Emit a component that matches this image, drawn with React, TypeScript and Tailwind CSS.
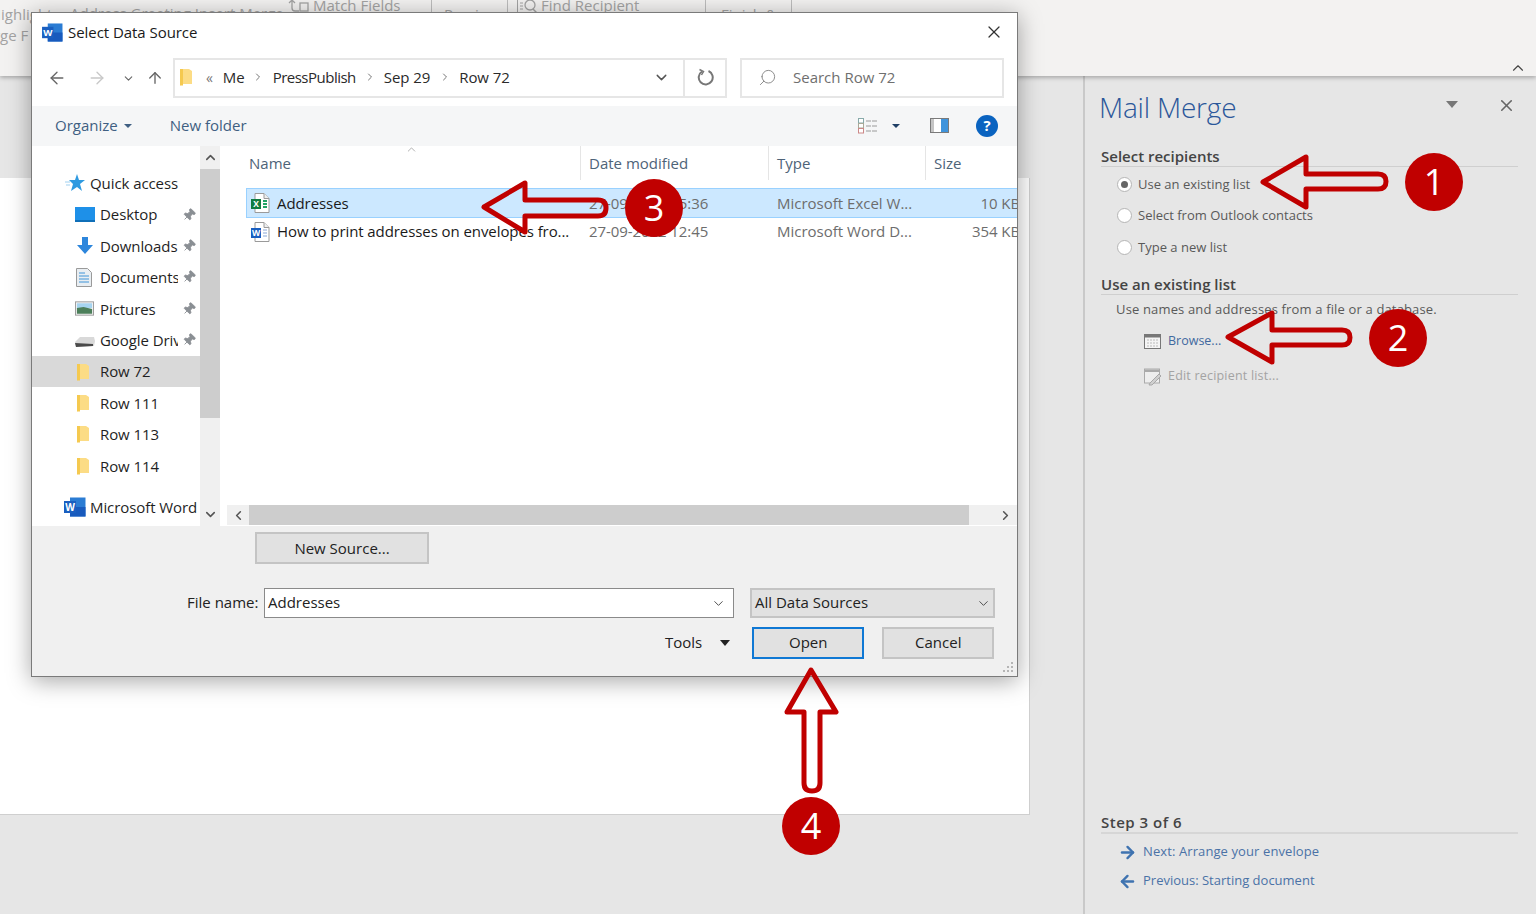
import { ChevronDown, ChevronLeft, ChevronRight, ChevronUp, ArrowLeft, ArrowRight, ArrowUp, Search, X, Pin } from 'lucide-react';

const WordIcon = ({ className = '' }: { className?: string }) => (
  <svg viewBox="0 0 22 20" className={className}>
    <rect x="6" y="0.5" width="15.5" height="19" fill="#2b7cd3" />
    <rect x="6" y="10" width="15.5" height="9.5" fill="#185abd" />
    <rect x="0" y="4" width="12" height="12" fill="#1a5fc0" />
    <text x="6" y="13.5" textAnchor="middle" fontSize="10" fontWeight="700" fill="#fff" fontFamily="Open Sans">W</text>
  </svg>
);

const DocIcon = ({ kind }: { kind: 'x' | 'w' }) => (
  <svg viewBox="0 0 20 20" className="w-[20px] h-[20px] shrink-0">
    <path d="M5 .5h9l5 5v14H5z" fill="#fff" stroke="#9a9a9a" />
    <path d="M14 .5v5h5" fill="#eee" stroke="#9a9a9a" />
    {kind === 'x' ? (
      <>
        <path d="M13 8h4M13 11h4M13 14h4" stroke="#21a366" strokeWidth="2" />
        <rect x="1" y="6" width="10" height="10" fill="#107c41" />
        <text x="6" y="14" textAnchor="middle" fontSize="8.5" fontWeight="700" fill="#fff" fontFamily="Open Sans">X</text>
      </>
    ) : (
      <>
        <path d="M13 8h4M13 11h4M13 14h4" stroke="#8aa8d8" strokeWidth="1.2" />
        <rect x="1" y="6" width="10" height="10" fill="#1a5fc0" />
        <text x="6" y="14" textAnchor="middle" fontSize="8.5" fontWeight="700" fill="#fff" fontFamily="Open Sans">W</text>
      </>
    )}
  </svg>
);

const Folder = () => (
  <svg viewBox="0 0 14 18" className="w-[14px] h-[18px]">
    <path d="M1 1h9l3 2v13H3l-2 1.500z" fill="#fcdc85" />
    <path d="M1 1h3v16.500H1z" fill="#f5c94f" />
  </svg>
);

const NavIcon = ({ name }: { name: string }) => {
  if (name === 'star')
    return (
      <svg viewBox="0 0 20 18" className="w-[20px] h-[18px]">
        <path d="M12 0l2 6h6l-5 4 2 7-5-4-6 4 2-7-4-4h6z" fill="#2f9ae0" />
        <path d="M0 8h5M1 11h4" stroke="#9fd0f0" />
      </svg>
    );
  if (name === 'desktop')
    return (
      <svg viewBox="0 0 20 15" className="w-[20px] h-[15px]">
        <rect width="20" height="14" fill="#1e90e8" />
        <rect y="13" width="20" height="2" fill="#0f6fb8" />
      </svg>
    );
  if (name === 'downloads')
    return (
      <svg viewBox="0 0 18 18" className="w-[18px] h-[18px] ml-[1px]">
        <path d="M6 0h6v8h5l-8 9-8-9h5z" fill="#2d86dc" />
      </svg>
    );
  if (name === 'documents')
    return (
      <svg viewBox="0 0 16 19" className="w-[16px] h-[19px] ml-[1px]">
        <path d="M.5.500h11l4 4v14H.5z" fill="#e9eef2" stroke="#9a9a9a" />
        <path d="M3 5h6M3 8h10M3 11h10M3 14h10" stroke="#3f94d8" />
      </svg>
    );
  if (name === 'pictures')
    return (
      <svg viewBox="0 0 20 15" className="w-[19px] h-[15px]">
        <rect x=".5" y=".5" width="19" height="14" fill="#f4f4f4" stroke="#9a9a9a" />
        <rect x="2" y="2" width="16" height="5" fill="#a6d4f0" />
        <path d="M2 7l7-1 9 2v5H2z" fill="#4c7f5a" />
      </svg>
    );
  if (name === 'drive')
    return (
      <svg viewBox="0 0 20 10" className="w-[20px] h-[10px] mt-[4px]">
        <path d="M5 0h14l1 4-1 5-18 1-1-5z" fill="#d9d9d9" />
        <path d="M0 6l18 1v2l-17 1z" fill="#4a4a4a" />
      </svg>
    );
  if (name === 'word') return <WordIcon className="w-[22px] h-[20px]" />;
  return <span className="ml-[1px] flex"><Folder /></span>;
};

const navItems = [
  { name: 'Desktop', icon: 'desktop', pin: true },
  { name: 'Downloads', icon: 'downloads', pin: true },
  { name: 'Documents', icon: 'documents', pin: true },
  { name: 'Pictures', icon: 'pictures', pin: true },
  { name: 'Google Drive', icon: 'drive', pin: true },
  { name: 'Row 72', icon: 'folder', active: true },
  { name: 'Row 111', icon: 'folder' },
  { name: 'Row 113', icon: 'folder' },
  { name: 'Row 114', icon: 'folder' },
];

const files = [
  { kind: 'x' as const, name: 'Addresses', date: '27-09-2022 15:36', type: 'Microsoft Excel W...', size: '10 KB', selected: true },
  { kind: 'w' as const, name: 'How to print addresses on envelopes fro...', date: '27-09-2022 12:45', type: 'Microsoft Word D...', size: '354 KB' },
];

const arrows = [
  'M1263 182 L1306 157 L1306 174 L1378 174 Q1386 174 1386 181.500 Q1386 189 1378 189 L1306 189 L1306 207 Z',
  'M1228 337 L1272 313 L1272 330 L1342 330 Q1350 330 1350 337.500 Q1350 345 1342 345 L1272 345 L1272 362 Z',
  'M484 207 L525 183 L525 200 L598 200 Q606 200 606 208 Q606 216 598 216 L525 216 L525 232 Z',
  'M811 670 L836 712 L820 712 L820 783 Q820 791 812 791 Q804 791 804 783 L804 712 L787 712 Z',
];

const badges = [
  { n: '1', cls: 'left-[1405px] top-[153px]' },
  { n: '2', cls: 'left-[1369px] top-[309px]' },
  { n: '3', cls: 'left-[625px] top-[179px]' },
  { n: '4', cls: 'left-[782px] top-[797px]' },
];

const Radio = ({ label, checked }: { label: string; checked?: boolean }) => (
  <div className="flex items-center h-[31.500px] pl-[16px]">
    <span className="w-[15px] h-[15px] rounded-full bg-white border border-[#b5b5b5] flex items-center justify-center mr-[6px]">
      {checked && <span className="w-[7px] h-[7px] rounded-full bg-[#666]" />}
    </span>
    <span className="text-[13px] text-[#595959]">{label}</span>
  </div>
);

const Btn = ({ label, cls }: { label: string; cls: string }) => (
  <div className={`flex items-center justify-center bg-[#e1e1e1] border-2 text-[15px] tracking-normal text-[#222] ${cls}`}>{label}</div>
);

export default function App() {
  return (
    <div className="relative w-[1536px] h-[914px] overflow-hidden bg-[#e6e6e6] font-['Open_Sans',sans-serif] flex flex-col">
      {/* ribbon */}
      <div className="h-[76px] shrink-0 bg-[#f3f2f1] shadow-[0_2px_4px_rgba(0,0,0,0.25)] relative z-10 text-[#a3a3a3] text-[15px] overflow-hidden">
        <span className="absolute left-[-10px] top-[3px] whitespace-nowrap">Highlight</span>
        <span className="absolute left-[70px] top-[2px] whitespace-nowrap">Address Greeting Insert Merge</span>
        <span className="absolute left-[-28px] top-[24px] whitespace-nowrap">Merge F</span>
        <svg viewBox="0 0 22 14" className="absolute left-[288px] top-0 w-[22px] h-[14px]">
          <path d="M1 3l3-3 3 3M4 1v7q0 3 3 3h4" fill="none" stroke="#a3a3a3" strokeWidth="1.300" />
          <rect x="12" y="3" width="8" height="8" fill="none" stroke="#a3a3a3" strokeWidth="1.300" />
        </svg>
        <span className="absolute left-[313px] top-[-6px] whitespace-nowrap">Match Fields</span>
        <span className="absolute left-[444px] top-[3px] whitespace-nowrap">Preview</span>
        <svg viewBox="0 0 22 14" className="absolute left-[517px] top-0 w-[22px] h-[14px]">
          <path d="M.5 0v13h8" fill="none" stroke="#a3a3a3" />
          <path d="M3 3h3M3 6h3M3 9h3" stroke="#a3a3a3" />
          <circle cx="13" cy="5" r="5" fill="none" stroke="#a3a3a3" strokeWidth="1.300" />
          <path d="M16 9l5 5" stroke="#a3a3a3" strokeWidth="1.500" />
        </svg>
        <span className="absolute left-[541px] top-[-6px] whitespace-nowrap">Find Recipient</span>
        <span className="absolute left-[721px] top-[3px] whitespace-nowrap">Finish &amp;</span>
        <div className="absolute left-[431px] top-0 w-px h-[13px] bg-[#bdbdbd]" />
        <div className="absolute left-[507px] top-0 w-px h-[13px] bg-[#bdbdbd]" />
        <div className="absolute left-[705px] top-0 w-px h-[13px] bg-[#bdbdbd]" />
        <div className="absolute left-[791px] top-0 w-px h-[13px] bg-[#bdbdbd]" />
        <ChevronUp className="absolute left-[1509px] top-[59px] text-[#444]" size={18} strokeWidth={1.5} />
      </div>

      <div className="flex-1 flex min-h-0">
        {/* document area */}
        <div className="w-[1083px] pt-[102px]">
          <div className="w-[1030px] h-[637px] bg-white border-r border-b border-[#cfcfcf]" />
        </div>

        {/* task pane */}
        <div className="flex-1 border-l-2 border-[#c9c9c9] pl-[16px] pr-[18px] flex flex-col relative">
          <div className="flex items-center h-[62px] pt-[3px] -ml-[2px]">
            <span className="text-[28px] font-light text-[#2b579a] tracking-[-0.2px] -mt-[4px]">Mail Merge</span>
            <svg viewBox="0 0 12 7" className="w-[12px] h-[7px] ml-[210px] mb-[8px]"><path d="M0 0h12L6 7z" fill="#777" /></svg>
            <X className="ml-[39px] mb-[6px] text-[#666]" size={19} strokeWidth={2} />
          </div>
          <div className="mt-[8px] text-[15px] font-semibold text-[#444] border-b border-[#cfcfcf] h-[21px] leading-[20px]">Select recipients</div>
          <div className="pt-[1.500px]">
            <Radio label="Use an existing list" checked />
            <Radio label="Select from Outlook contacts" />
            <Radio label="Type a new list" />
          </div>
          <div className="mt-[10.500px] text-[15px] font-semibold text-[#444] border-b border-[#cfcfcf] h-[21px] leading-[20px]">Use an existing list</div>
          <div className="pl-[15px] mt-[4.500px] text-[13px] tracking-[0.15px] text-[#595959] h-[20px] leading-[20px]">Use names and addresses from a file or a database.</div>
          <div className="flex items-center pl-[43px] mt-[12.500px] h-[20px]">
            <svg viewBox="0 0 17 15" className="w-[17px] h-[15px] mr-[7px]">
              <rect x=".5" y=".5" width="16" height="14" fill="#f5f5f5" stroke="#777" />
              <rect x="1" y="1" width="15" height="2.500" fill="#777" />
              <path d="M3 6h11M3 9h11M3 12h11" stroke="#bbb" strokeDasharray="2 1" />
            </svg>
            <span className="text-[12.500px] text-[#41699f]">Browse...</span>
          </div>
          <div className="flex items-center pl-[43px] mt-[15px] h-[20px]">
            <svg viewBox="0 0 18 18" className="w-[18px] h-[18px] mr-[6px]">
              <rect x=".5" y="1" width="15" height="14" fill="#eee" stroke="#aaa" />
              <rect x="1" y="1.500" width="14" height="2.500" fill="#aaa" />
              <path d="M6 15l9-9 2 2-9 9H5z" fill="#d0d0d0" stroke="#a8a8a8" />
            </svg>
            <span className="text-[12.500px] tracking-[0.2px] text-[#a3a3a3]">Edit recipient list...</span>
          </div>
          <div className="flex-1" />
          <div className="text-[15px] tracking-[0.5px] font-semibold text-[#444] border-b-2 border-[#d6d6d6] h-[22px] leading-[20px]">Step 3 of 6</div>
          <div className="flex items-center pl-[17px] mt-[8px] h-[20px]">
            <ArrowRight className="text-[#3f73b0] mr-[6px]" size={19} strokeWidth={3} />
            <span className="text-[13px] tracking-[0.1px] text-[#4a72a6]">Next: Arrange your envelope</span>
          </div>
          <div className="flex items-center pl-[17px] mt-[9px] mb-[23px] h-[20px]">
            <ArrowLeft className="text-[#3f73b0] mr-[6px]" size={19} strokeWidth={3} />
            <span className="text-[13px] text-[#4a72a6]">Previous: Starting document</span>
          </div>
        </div>
      </div>

      {/* file dialog */}
      <div className="absolute z-20 left-[31px] top-[12px] w-[987px] h-[665px] bg-white border border-[#7a7a7a] shadow-[0_4px_22px_rgba(0,0,0,0.35)] overflow-hidden flex flex-col text-[#222] tracking-[-0.08px]">
        <div className="h-[40px] shrink-0 flex items-center pl-[10px] pr-[13px] pb-[1px]">
          <WordIcon className="w-[21px] h-[19px] mr-[5px]" />
          <span className="text-[15px] tracking-[-0.05px] text-[#1a1a1a]">Select Data Source</span>
          <X className="ml-auto mb-[2px] text-[#333]" size={20} strokeWidth={1.500} />
        </div>
        <div className="h-[53px] shrink-0 flex items-start pt-[5px] pr-[13px] text-[#555]">
          <div className="w-[141px] h-[40px] flex items-center pl-[15px] shrink-0">
            <ArrowLeft size={20} strokeWidth={1.600} className="text-[#666]" />
            <ArrowRight size={20} strokeWidth={1.600} className="text-[#c8c8c8] ml-[20px]" />
            <ChevronDown size={13} strokeWidth={2} className="text-[#666] ml-[15px]" />
            <ArrowUp size={18} strokeWidth={1.800} className="text-[#666] ml-[11px]" />
          </div>
          <div className="w-[510px] h-[40px] border-2 border-r-0 border-[#e6e6e6] flex items-center pb-[2px] text-[15px] text-[#2a2a2a]">
            <div className="ml-[4px]"><Folder /></div>
            <span className="ml-[13px] text-[#777] text-[14px]">«</span>
            <span className="ml-[10px]">Me</span>
            <ChevronRight size={12} strokeWidth={2} className="ml-[7px] text-[#777]" />
            <span className="ml-[9px] tracking-[-0.5px]">PressPublish</span>
            <ChevronRight size={12} strokeWidth={2} className="ml-[8px] text-[#777]" />
            <span className="ml-[8px]">Sep 29</span>
            <ChevronRight size={12} strokeWidth={2} className="ml-[9px] text-[#777]" />
            <span className="ml-[8px]">Row 72</span>
            <ChevronDown size={17} className="ml-auto mr-[13px] text-[#555]" />
          </div>
          <div className="w-[44px] h-[40px] border-2 border-[#e6e6e6] flex items-center justify-center pb-[2px]">
            <svg viewBox="0 0 18 18" className="w-[18px] h-[18px]">
              <path d="M6 3.500A7 7 0 1 0 12.500 3" fill="none" stroke="#777" strokeWidth="2" />
              <path d="M3.500 1.500L7.500 3.500L5.500 7" fill="none" stroke="#777" strokeWidth="1.500" />
            </svg>
          </div>
          <div className="ml-[13px] flex-1 h-[40px] border-2 border-[#e6e6e6] flex items-center pl-[16px] pb-[2px] text-[15px] tracking-normal text-[#6f6f6f]">
            <Search size={19} strokeWidth={1.200} className="text-[#888] -scale-x-100 mr-[16px]" />
            Search Row 72
          </div>
        </div>
        <div className="h-[40px] shrink-0 bg-[#f5f6f7] flex items-center pl-[23px] pr-[19px] pb-[1px] text-[15px] tracking-normal text-[#3f5f82]">
          <span>Organize</span>
          <svg viewBox="0 0 8 4" className="w-[8px] h-[4px] ml-[6px]"><path d="M0 0h8L4 4z" fill="#3f5f82" /></svg>
          <span className="ml-[38px]">New folder</span>
          <svg viewBox="0 0 20 16" className="w-[20px] h-[16px] ml-auto">
            <rect x=".5" y=".5" width="5" height="4.500" fill="#fff" stroke="#8aa" />
            <rect x=".5" y="5.500" width="5" height="4.500" fill="#fff" stroke="#aa9" />
            <rect x=".5" y="10.500" width="5" height="4.500" fill="#fff" stroke="#c88" />
            <path d="M8 3h12M8 8h12M8 13h12" stroke="#9a9a9a" strokeDasharray="5 1" />
          </svg>
          <svg viewBox="0 0 8 4" className="w-[8px] h-[4px] ml-[14px]"><path d="M0 0h8L4 4z" fill="#1f3f66" /></svg>
          <svg viewBox="0 0 19 15" className="w-[19px] h-[15px] ml-[30px]">
            <rect x=".5" y=".5" width="18" height="14" fill="#fff" stroke="#7a7a7a" />
            <rect x="11" y="1" width="7" height="13" fill="#3f94dc" />
            <rect x="1" y="1" width="3" height="13" fill="#c5c5c5" />
          </svg>
          <div className="ml-[27px] w-[22px] h-[22px] rounded-full bg-[#0a63c0] flex items-center justify-center text-white text-[15px] font-bold">?</div>
        </div>
        <div className="h-[380px] shrink-0 flex">
          <div className="w-[168px] shrink-0 pt-[21.600px] text-[15px] text-[#1f1f1f]">
            <div className="h-[31.400px] flex items-center pl-[33px]">
              <span className="w-[24px]"><NavIcon name="star" /></span>
              <span className="ml-[1px]">Quick access</span>
            </div>
            {navItems.map(it => (
              <div key={it.name} className={`h-[31.400px] flex items-center relative ${it.active ? 'bg-[#d9d9d9]' : ''}`}>
                <span className="w-[68px] pl-[43px] flex justify-start items-center shrink-0"><NavIcon name={it.icon} /></span>
                <span className="w-[78px] overflow-hidden whitespace-nowrap">{it.name}</span>
                {it.pin && <Pin size={14} fill="#8a8f94" strokeWidth={1.500} className="text-[#8a8f94] rotate-45 ml-[4px]" />}
              </div>
            ))}
            <div className="h-[31.400px] mt-[10px] flex items-center pl-[32px]">
              <NavIcon name="word" />
              <span className="ml-[4px]">Microsoft Word</span>
            </div>
          </div>
          <div className="w-[20px] shrink-0 bg-[#f0f0f0] flex flex-col items-center">
            <div className="h-[23px] flex items-center"><ChevronUp size={15} strokeWidth={2.500} className="text-[#555]" /></div>
            <div className="w-full h-[249px] bg-[#cdcdcd]" />
            <div className="mt-auto h-[24px] flex items-center"><ChevronDown size={15} strokeWidth={2.500} className="text-[#555]" /></div>
          </div>
          <div className="flex-1 min-w-0 pl-[3px] flex flex-col">
            <div className="h-[34px] flex relative text-[15px] tracking-normal text-[#4e6378] shrink-0 pt-[6px]">
              <ChevronUp size={13} strokeWidth={1.200} className="absolute left-[182px] top-[-3px] text-[#888]" />
              <div className="w-[357px] pl-[26px]">Name</div>
              <div className="w-[188px] pl-[8px] border-l border-[#e5e5e5] -mt-[6px] pt-[6px]">Date modified</div>
              <div className="w-[157px] pl-[8px] border-l border-[#e5e5e5] -mt-[6px] pt-[6px]">Type</div>
              <div className="pl-[8px] border-l border-[#e5e5e5] -mt-[6px] pt-[6px]">Size</div>
            </div>
            <div className="flex-1 pt-[8px] pl-[23px] min-h-0">
              {files.map(f => (
                <div key={f.name} className={`flex items-center w-[790px] text-[15px] ${f.selected ? 'h-[30px] bg-[#cce8ff] border border-[#99d1ff]' : 'h-[27px] border border-transparent'}`}>
                  <span className="ml-[3px] flex"><DocIcon kind={f.kind} /></span>
                  <span className="w-[319px] pl-[7px] whitespace-nowrap text-[#1a1a1a]">{f.name}</span>
                  <span className="w-[188px] whitespace-nowrap text-[#6d6d6d]">{f.date}</span>
                  <span className="w-[182px] whitespace-nowrap tracking-normal text-[#6d6d6d]">{f.type}</span>
                  <span className="w-[61px] text-right whitespace-nowrap text-[#6d6d6d]">{f.size}</span>
                </div>
              ))}
            </div>
            <div className="h-[20px] shrink-0 mb-[1px] ml-[4px] flex items-center bg-[#f0f0f0]">
              <span className="w-[22px] flex justify-center"><ChevronLeft size={15} strokeWidth={2.500} className="text-[#555]" /></span>
              <div className="w-[720px] h-full bg-[#cdcdcd]" />
              <span className="ml-auto w-[24px] flex justify-center"><ChevronRight size={15} strokeWidth={2.500} className="text-[#555]" /></span>
            </div>
          </div>
        </div>
        <div className="flex-1 bg-[#f0f0f0] text-[15px] tracking-normal text-[#222]">
          <div className="pl-[223px] pt-[6px]">
            <Btn label="New Source..." cls="w-[174px] h-[32px] border-[#c4c4c4]" />
          </div>
          <div className="flex items-center mt-[24px] h-[30px] pl-[155px]">
            <span className="w-[76px] pb-[2px] whitespace-nowrap">File name:</span>
            <div className="w-[470px] h-[30px] ml-[1px] bg-white border border-[#8a8a8a] flex items-center pl-[3px] pb-[2px]">
              Addresses
              <ChevronDown size={15} strokeWidth={1.500} className="ml-auto mr-[7px] mt-[2px] text-[#444]" />
            </div>
            <div className="w-[245px] h-[30px] ml-[16px] bg-[#e1e1e1] border-2 border-[#c4c4c4] flex items-center pl-[3px] pb-[2px]">
              All Data Sources
              <ChevronDown size={15} strokeWidth={1.500} className="ml-auto mr-[2px] mt-[2px] text-[#444]" />
            </div>
          </div>
          <div className="flex items-center mt-[9px] h-[32px] pl-[633px]">
            <span className="pb-[2px]">Tools</span>
            <svg viewBox="0 0 10 6" className="w-[10px] h-[6px] ml-[18px]"><path d="M0 0h10L5 6z" fill="#222" /></svg>
            <Btn label="Open" cls="w-[112px] h-[32px] ml-[22px] pb-[2px] border-[#0f78d4]" />
            <Btn label="Cancel" cls="w-[112px] h-[32px] ml-[18px] pb-[2px] border-[#c4c4c4]" />
          </div>
        </div>
        <svg viewBox="0 0 12 12" className="absolute right-[3px] bottom-[3px] w-[12px] h-[12px]">
          <path d="M9 1h2v2H9zM5 5h2v2H5zM9 5h2v2H9zM1 9h2v2H1zM5 9h2v2H5zM9 9h2v2H9z" fill="#b5b5b5" />
        </svg>
      </div>

      {/* callouts */}
      <svg viewBox="0 0 1536 914" className="absolute inset-0 z-30 w-[1536px] h-[914px] pointer-events-none">
        {arrows.map(d => (
          <path key={d} d={d} fill="none" stroke="#c00000" strokeWidth="5" strokeLinejoin="round" />
        ))}
      </svg>
      {badges.map(b => (
        <div key={b.n} className={`absolute z-30 w-[58px] h-[58px] rounded-full bg-[#c00000] text-white text-[36px] flex items-center justify-center ${b.cls}`}>{b.n}</div>
      ))}
    </div>
  );
}
